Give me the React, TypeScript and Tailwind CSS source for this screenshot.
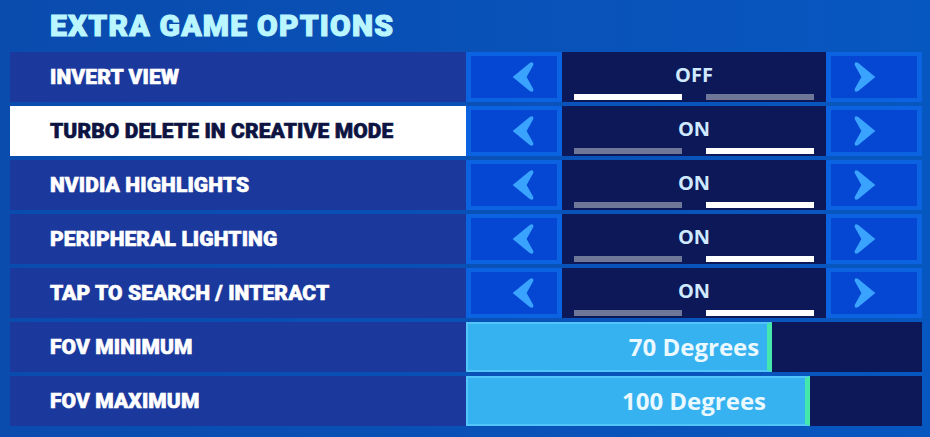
import React from 'react';

type Toggle = { kind: 'toggle'; label: string; value: 'ON' | 'OFF' };
type Slider = { kind: 'slider'; label: string; text: string; fill: number };
type Option = Toggle | Slider;

const options: Option[] = [
  { kind: 'toggle', label: 'INVERT VIEW', value: 'OFF' },
  { kind: 'toggle', label: 'TURBO DELETE IN CREATIVE MODE', value: 'ON' },
  { kind: 'toggle', label: 'NVIDIA HIGHLIGHTS', value: 'ON' },
  { kind: 'toggle', label: 'PERIPHERAL LIGHTING', value: 'ON' },
  { kind: 'toggle', label: 'TAP TO SEARCH / INTERACT', value: 'ON' },
  { kind: 'slider', label: 'FOV MINIMUM', text: '70 Degrees', fill: 306 },
  { kind: 'slider', label: 'FOV MAXIMUM', text: '100 Degrees', fill: 344 },
];

const Arrow = ({ dir }: { dir: 'left' | 'right' }) => (
  <svg
    width="23"
    height="30"
    viewBox="0 0 22 29"
    className={dir === 'right' ? 'scale-x-[-1]' : ''}
  >
    <path
      d="M0.5 14.5 L17 1 Q21 -1 20.5 3 L14 14.5 L20.5 26 Q21 30 17 28 Z"
      fill="#3aa2ff"
    />
  </svg>
);

const ArrowButton = ({ dir }: { dir: 'left' | 'right' }) => (
  <div className="w-[96px] h-full bg-[#0b63e2] border-x-[5px] border-y-[4px] border-[#0b63e2]">
    <div
      className={`w-full h-full bg-[#0547d2] flex items-center ${
        dir === 'left' ? 'justify-end pr-[22px]' : 'justify-start pl-[22px]'
      }`}
    >
      <Arrow dir={dir} />
    </div>
  </div>
);

const ToggleControl = ({ value }: { value: 'ON' | 'OFF' }) => {
  const on = value === 'ON';
  return (
    <div className="flex h-full">
      <ArrowButton dir="left" />
      <div className="w-[264px] h-full bg-[#0c1858] flex flex-col items-center px-[12px]">
        <div className="h-[42px] flex items-center text-[20px] font-bold text-[#cfe9ff] font-['Open_Sans',sans-serif] leading-none pt-[4px]">
          {value}
        </div>
        <div className="w-full flex gap-[24px]">
          <div className={`flex-1 h-[6px] ${on ? 'bg-[#6e7797]' : 'bg-white'}`} />
          <div className={`flex-1 h-[6px] ${on ? 'bg-white' : 'bg-[#6e7797]'}`} />
        </div>
      </div>
      <ArrowButton dir="right" />
    </div>
  );
};

const SliderControl = ({ text, fill }: { text: string; fill: number }) => (
  <div className="relative w-[456px] h-full bg-[#0c1858] flex">
    <div
      className="h-full bg-[#37b2f0] border-y-2 border-l-2 border-r-[5px] border-[#52c6fa] border-r-[#45e8ab]"
      style={{ width: fill }}
    />
    <div className="absolute inset-0 flex items-center justify-center text-[24px] font-bold text-[#eaf8ff] font-['Open_Sans',sans-serif] leading-none">
      {text}
    </div>
  </div>
);

export default function App() {
  return (
    <div className="w-[930px] h-[437px] overflow-hidden bg-gradient-to-r from-[#0a4bae] to-[#0757c0] font-['Roboto',sans-serif]">
      <div className="h-[52px] pl-[50px] pt-[8px]">
        <h1 className="text-[30px] leading-[36px] font-black text-[#baf6ff] tracking-[1.2px] [-webkit-text-stroke:1.1px_#baf6ff]">
          EXTRA GAME OPTIONS
        </h1>
      </div>
      <div className="flex flex-col gap-[4px] pl-[10px] pr-[8px]">
        {options.map((opt, i) => {
          const selected = i === 1;
          return (
            <div key={opt.label} className="flex h-[50px]">
              <div
                className={`w-[456px] h-full flex items-center pl-[40px] text-[21px] font-black leading-none tracking-[0.1px] [-webkit-text-stroke:0.6px_currentColor] ${
                  selected ? 'bg-white text-[#0d1442]' : 'bg-[#1b389c] text-white'
                }`}
              >
                {opt.label}
              </div>
              {opt.kind === 'toggle' ? (
                <ToggleControl value={opt.value} />
              ) : (
                <SliderControl text={opt.text} fill={opt.fill} />
              )}
            </div>
          );
        })}
      </div>
    </div>
  );
}
